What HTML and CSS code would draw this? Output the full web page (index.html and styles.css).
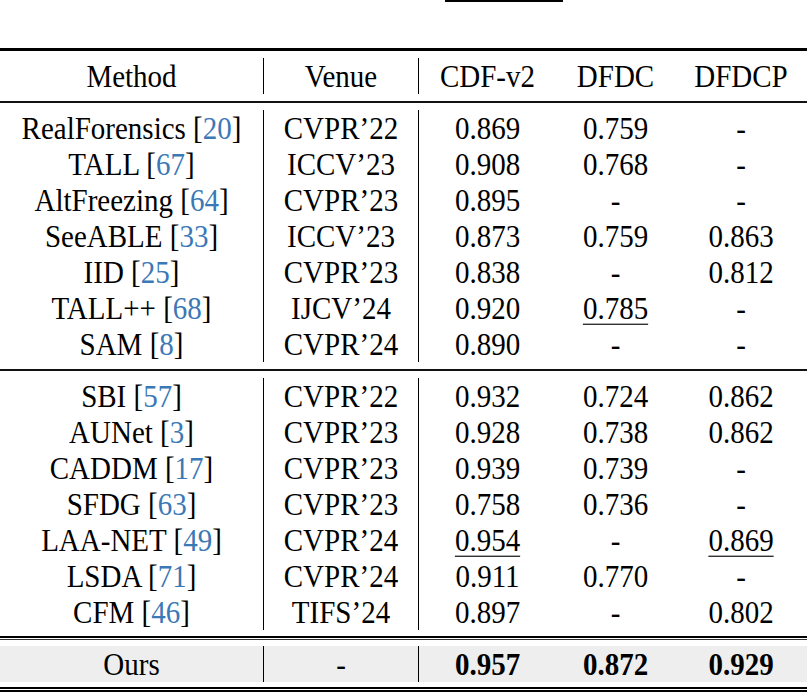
FILE: index.html
```html
<!DOCTYPE html>
<html lang="en">
<head>
<meta charset="utf-8">
<title>Comparison table</title>
<link rel="stylesheet" href="styles.css">
</head>
<body>
<div class="page">
  <div class="cut"></div>
  <div class="rule heavy"></div>
  <div class="section">
    <div class="row">
      <div class="cell sep"><span class="t">Method</span></div>
      <div class="cell sep"><span class="t">Venue</span></div>
      <div class="cell"><span class="t">CDF-v2</span></div>
      <div class="cell"><span class="t">DFDC</span></div>
      <div class="cell"><span class="t">DFDCP</span></div>
    </div>
  </div>
  <div class="rule mid"></div>
  <div class="section">
    <div class="row"><div class="cell sep"><span class="t">RealForensics [<span class="cite">20</span>]</span></div><div class="cell sep"><span class="t">CVPR’22</span></div><div class="cell"><span class="t">0.869</span></div><div class="cell"><span class="t">0.759</span></div><div class="cell"><span class="t">-</span></div></div>
    <div class="row"><div class="cell sep"><span class="t">TALL [<span class="cite">67</span>]</span></div><div class="cell sep"><span class="t">ICCV’23</span></div><div class="cell"><span class="t">0.908</span></div><div class="cell"><span class="t">0.768</span></div><div class="cell"><span class="t">-</span></div></div>
    <div class="row"><div class="cell sep"><span class="t">AltFreezing [<span class="cite">64</span>]</span></div><div class="cell sep"><span class="t">CVPR’23</span></div><div class="cell"><span class="t">0.895</span></div><div class="cell"><span class="t">-</span></div><div class="cell"><span class="t">-</span></div></div>
    <div class="row"><div class="cell sep"><span class="t">SeeABLE [<span class="cite">33</span>]</span></div><div class="cell sep"><span class="t">ICCV’23</span></div><div class="cell"><span class="t">0.873</span></div><div class="cell"><span class="t">0.759</span></div><div class="cell"><span class="t">0.863</span></div></div>
    <div class="row"><div class="cell sep"><span class="t">IID [<span class="cite">25</span>]</span></div><div class="cell sep"><span class="t">CVPR’23</span></div><div class="cell"><span class="t">0.838</span></div><div class="cell"><span class="t">-</span></div><div class="cell"><span class="t">0.812</span></div></div>
    <div class="row"><div class="cell sep"><span class="t">TALL++ [<span class="cite">68</span>]</span></div><div class="cell sep"><span class="t">IJCV’24</span></div><div class="cell"><span class="t">0.920</span></div><div class="cell"><span class="t second">0.785</span></div><div class="cell"><span class="t">-</span></div></div>
    <div class="row"><div class="cell sep"><span class="t">SAM [<span class="cite">8</span>]</span></div><div class="cell sep"><span class="t">CVPR’24</span></div><div class="cell"><span class="t">0.890</span></div><div class="cell"><span class="t">-</span></div><div class="cell"><span class="t">-</span></div></div>
  </div>
  <div class="rule mid"></div>
  <div class="section">
    <div class="row"><div class="cell sep"><span class="t">SBI [<span class="cite">57</span>]</span></div><div class="cell sep"><span class="t">CVPR’22</span></div><div class="cell"><span class="t">0.932</span></div><div class="cell"><span class="t">0.724</span></div><div class="cell"><span class="t">0.862</span></div></div>
    <div class="row"><div class="cell sep"><span class="t">AUNet [<span class="cite">3</span>]</span></div><div class="cell sep"><span class="t">CVPR’23</span></div><div class="cell"><span class="t">0.928</span></div><div class="cell"><span class="t">0.738</span></div><div class="cell"><span class="t">0.862</span></div></div>
    <div class="row"><div class="cell sep"><span class="t">CADDM [<span class="cite">17</span>]</span></div><div class="cell sep"><span class="t">CVPR’23</span></div><div class="cell"><span class="t">0.939</span></div><div class="cell"><span class="t">0.739</span></div><div class="cell"><span class="t">-</span></div></div>
    <div class="row"><div class="cell sep"><span class="t">SFDG [<span class="cite">63</span>]</span></div><div class="cell sep"><span class="t">CVPR’23</span></div><div class="cell"><span class="t">0.758</span></div><div class="cell"><span class="t">0.736</span></div><div class="cell"><span class="t">-</span></div></div>
    <div class="row"><div class="cell sep"><span class="t">LAA-NET [<span class="cite">49</span>]</span></div><div class="cell sep"><span class="t">CVPR’24</span></div><div class="cell"><span class="t second">0.954</span></div><div class="cell"><span class="t">-</span></div><div class="cell"><span class="t second">0.869</span></div></div>
    <div class="row"><div class="cell sep"><span class="t">LSDA [<span class="cite">71</span>]</span></div><div class="cell sep"><span class="t">CVPR’24</span></div><div class="cell"><span class="t">0.911</span></div><div class="cell"><span class="t">0.770</span></div><div class="cell"><span class="t">-</span></div></div>
    <div class="row"><div class="cell sep"><span class="t">CFM [<span class="cite">46</span>]</span></div><div class="cell sep"><span class="t">TIFS’24</span></div><div class="cell"><span class="t">0.897</span></div><div class="cell"><span class="t">-</span></div><div class="cell"><span class="t">0.802</span></div></div>
  </div>
  <div class="rule double"></div>
  <div class="section ours-section">
    <div class="row ours"><div class="cell sep"><span class="t">Ours</span></div><div class="cell sep"><span class="t">-</span></div><div class="cell best"><span class="t">0.957</span></div><div class="cell best"><span class="t">0.872</span></div><div class="cell best"><span class="t">0.929</span></div></div>
  </div>
  <div class="rule double-bottom"></div>
</div>
</body>
</html>
```

FILE: styles.css
```css
html, body {
  margin: 0;
  padding: 0;
  background: #ffffff;
}

body {
  font-family: "Liberation Serif", "Times New Roman", serif;
  font-size: 29px;
  color: #000000;
}

.page {
  width: 807px;
}

.cut {
  margin-left: 445px;
  width: 118px;
  border-top: 2px solid #000;
}

.rule.heavy {
  margin-top: 46px;
  border-top: 3px solid #000;
}

.rule.mid {
  border-top: 2px solid #111;
}

.rule.double {
  margin-top: -1px;
  height: 1px;
  border-top: 2px solid #000;
  border-bottom: 1px solid #333;
}

.rule.double-bottom {
  height: 1px;
  border-top: 2px solid #000;
  border-bottom: 2px solid #000;
}

.section {
  margin: 7px 0;
}

.section.ours-section {
  margin: 6px 0 5px;
}

.row {
  display: grid;
  grid-template-columns: 264px 155px 137px 119px 132px;
  height: 36px;
  line-height: 36px;
}

.row.ours {
  background: #eeeeee;
}

.cell {
  text-align: center;
  white-space: nowrap;
}

.cell.sep {
  border-right: 1px solid #000;
}

.t {
  display: inline-block;
  transform: scaleY(1.12);
}

.cite {
  color: #3b78b6;
}

.second {
  text-decoration: underline;
  text-decoration-thickness: 1px;
  text-underline-offset: 4px;
}

.best {
  font-weight: bold;
}
```
